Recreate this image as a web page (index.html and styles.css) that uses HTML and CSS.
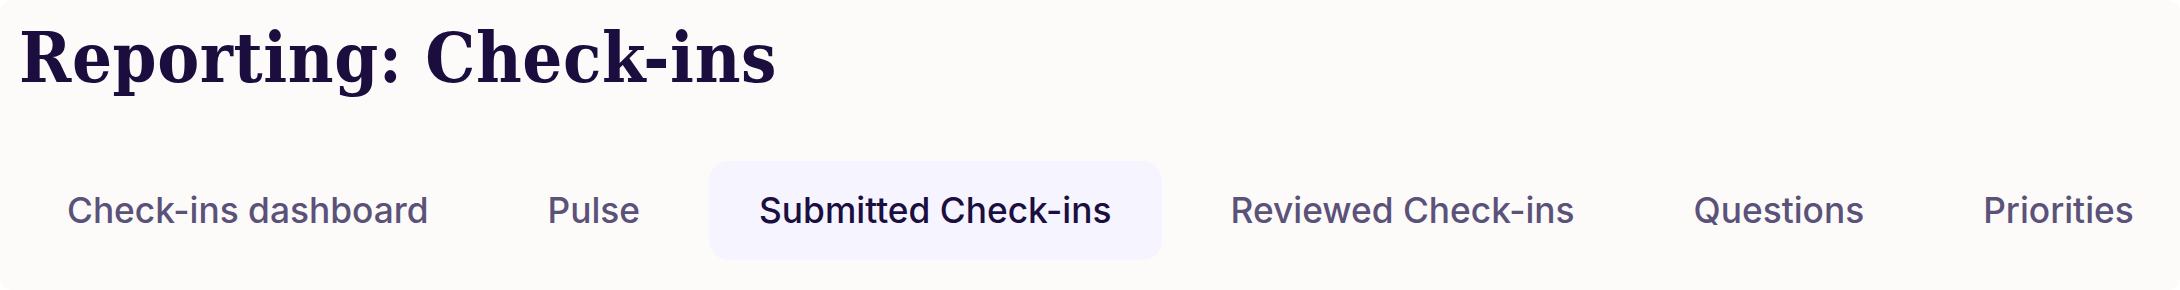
FILE: index.html
```html
<!DOCTYPE html>
<html>
<head>
<meta charset="utf-8">
<title>Reporting: Check-ins</title>
<link rel="stylesheet" href="styles.css">
</head>
<body>
  <section class="report-box">
    <h1 class="page-title">Reporting: Check-ins</h1>
    <nav class="tabs">
      <a class="tab" href="javascript:;">Check-ins dashboard</a>
      <a class="tab" href="javascript:;">Pulse</a>
      <a class="tab active" href="javascript:;">Submitted Check-ins</a>
      <a class="tab" href="javascript:;">Reviewed Check-ins</a>
      <a class="tab" href="javascript:;">Questions</a>
      <a class="tab" href="javascript:;">Priorities</a>
    </nav>
  </section>
</body>
</html>
```
FILE: styles.css
```css
html, body {
  width: 100%;
  height: 100%;
}
body {
  margin: 0;
  overflow: hidden;
  background: #fff;
}
.report-box {
  box-sizing: border-box;
  height: 100%;
  padding: 23px 17px 0;
  background-color: #fcfbfa;
  border-radius: 12px;
}
.page-title {
  margin: 0 0 68px;
  padding-left: 2px;
  font-family: "DejaVu Serif Condensed", "DejaVu Serif", serif;
  font-weight: 700;
  font-size: 70px;
  line-height: 70px;
  letter-spacing: 0.6px;
  color: #1b0d3e;
}
.tabs {
  display: flex;
  gap: 19px;
}
.tab {
  padding: 29px 50px 28px;
  border-radius: 20px;
  font-family: Inter, "Noto Sans", sans-serif;
  font-weight: 500;
  font-size: 35.3px;
  line-height: 1.2;
  color: #5b5279;
  text-decoration: none;
  white-space: nowrap;
}
.tab.active {
  background-color: #f6f4fe;
  color: #1a0f40;
}
```
